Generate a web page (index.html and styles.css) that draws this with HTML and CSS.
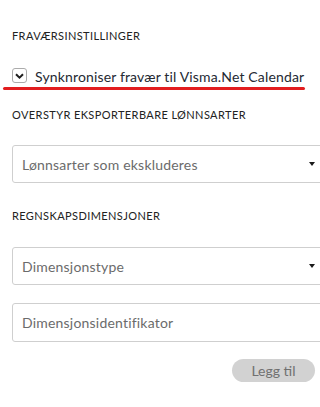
FILE: index.html
```html
<!DOCTYPE html>
<html lang="no">
<head>
<meta charset="utf-8">
<link rel="stylesheet" href="styles.css">
</head>
<body>
<div class="page">
  <h2 class="title">FRAVÆRSINSTILLINGER</h2>
  <label class="check-row">
    <span class="checkbox">
      <svg width="9" height="6" viewBox="0 0 9 6"><polyline points="1,1.2 4.5,4.6 8,1.2" fill="none" stroke="#1e1e1e" stroke-width="2"/></svg>
    </span>
    <span class="check-label">Synknroniser fravær til Visma.Net Calendar</span>
  </label>
  <h2 class="title t2">OVERSTYR EKSPORTERBARE LØNNSARTER</h2>
  <div class="field select s1">
    <span class="placeholder">Lønnsarter som ekskluderes</span>
    <span class="caret"></span>
  </div>
  <h2 class="title t3">REGNSKAPSDIMENSJONER</h2>
  <div class="field select s2">
    <span class="placeholder">Dimensjonstype</span>
    <span class="caret"></span>
  </div>
  <div class="field input">
    <span class="placeholder">Dimensjonsidentifikator</span>
  </div>
  <div class="actions">
    <button class="btn" type="button">Legg til</button>
  </div>
</div>
</body>
</html>
```
FILE: styles.css
```css
html, body {
  margin: 0;
  padding: 0;
  overflow: hidden;
  background: #fff;
}
body {
  font-family: Lato, "Open Sans", Arial, sans-serif;
  color: #252525;
}
.page {
  width: 340px;
  padding: 29px 0 0 12px;
}
.title {
  margin: 0;
  font-size: 11px;
  line-height: 14px;
  font-weight: 400;
  color: #222;
  letter-spacing: 0.4px;
}
.check-row {
  position: relative;
  display: flex;
  align-items: flex-start;
  gap: 8px;
  height: 18px;
  margin-top: 25px;
}
.check-row::after {
  content: "";
  position: absolute;
  left: -9px;
  top: 19px;
  width: 302px;
  height: 3px;
  border-radius: 2px;
  background: #e21d1f;
}
.checkbox {
  box-sizing: border-box;
  width: 15px;
  height: 15px;
  border: 1px solid #ababab;
  border-radius: 3px;
  display: flex;
  align-items: center;
  justify-content: center;
  flex: none;
}
.check-label {
  font-size: 14px;
  line-height: 18px;
  color: #252a33;
  letter-spacing: 0.15px;
}
.t2 { margin-top: 22px; }
.t3 { margin-top: 26px; }
.field {
  box-sizing: border-box;
  width: 330px;
  height: 38px;
  border: 1px solid #cfcfcf;
  border-radius: 3px;
  display: flex;
  align-items: center;
  padding-left: 9px;
}
.s1 { margin-top: 23px; }
.s2 { margin-top: 24px; }
.input { margin-top: 18px; height: 39px; }
.placeholder {
  font-size: 14px;
  color: #6b6b6b;
  letter-spacing: 0.2px;
}
.caret {
  margin-left: auto;
  margin-right: 26px;
  width: 0;
  height: 0;
  border-left: 3px solid transparent;
  border-right: 3px solid transparent;
  border-top: 4px solid #1a1a1a;
}
.actions {
  display: flex;
  justify-content: flex-end;
  width: 303px;
  margin-top: 17px;
}
.btn {
  width: 83px;
  height: 23px;
  border: none;
  border-radius: 12px;
  background: #d2d2d2;
  color: #707070;
  font-family: Lato, "Open Sans", Arial, sans-serif;
  font-size: 14px;
  padding: 0;
}
```
